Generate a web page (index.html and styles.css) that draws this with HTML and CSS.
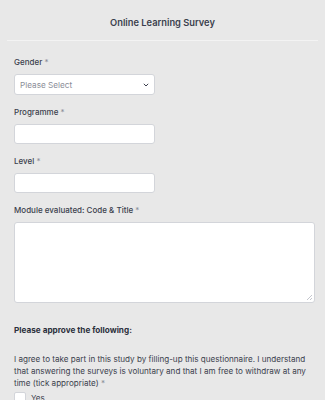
FILE: index.html
```html
<!DOCTYPE html>
<html lang="en">
    <head>
        <meta charset="utf-8">
        <title>Online Learning Survey</title>
        <meta name="viewport" content="width=device-width, initial-scale=1">
        <link rel="stylesheet" href="styles.css">
    </head>
    <body>
        <div class="formHeader">
            <h1 class="formTitle">Online Learning Survey</h1>
        </div>

        <div class="field">
            <label class="fieldLabel">Gender <span class="req">*</span></label>
            <div class="selectBox">
                <span class="placeholder">Please Select</span>
                <svg class="caret" width="6" height="4" viewBox="0 0 6 4"><path d="M0.8 0.8 L3 3 L5.2 0.8" fill="none" stroke="#3b3f4d" stroke-width="1"/></svg>
            </div>
        </div>

        <div class="field">
            <label class="fieldLabel">Programme <span class="req">*</span></label>
            <div class="textInput"></div>
        </div>

        <div class="field">
            <label class="fieldLabel">Level <span class="req">*</span></label>
            <div class="textInput"></div>
        </div>

        <div class="field">
            <label class="fieldLabel">Module evaluated: Code &amp; Title <span class="req">*</span></label>
            <div class="textArea">
                <svg class="grip" width="6" height="6" viewBox="0 0 6 6"><path d="M1 6 L6 1 M4 6 L6 4" stroke="#b5b8c0" stroke-width="0.8"/></svg>
            </div>
        </div>

        <h2 class="sectionHead">Please approve the following:</h2>

        <div class="field">
            <p class="consent">I agree to take part in this study by filling-up this questionnaire. I understand that answering the surveys is voluntary and that I am free to withdraw at any time (tick appropriate) <span class="req">*</span></p>
            <div class="checkRow">
                <span class="checkBox"></span>
                <span class="checkText">Yes</span>
            </div>
        </div>
    </body>
</html>
```

FILE: styles.css
```css
html, body {
    margin: 0;
    padding: 0;
}

body {
    background-color: #e8e8e8;
    font-family: Inter, "Noto Sans", sans-serif;
    color: #3b3f4d;
    width: 325px;
    height: 400px;
    overflow: hidden;
}

.formHeader {
    margin: 0 7px;
    padding: 16px 0 10px 0;
    border-bottom: 1px solid #f3f3f3;
    text-align: center;
}

.formTitle {
    margin: 0;
    font-size: 9.3px;
    font-weight: 600;
    line-height: 14px;
    color: #3b3f4d;
}

.field {
    padding: 0 10px 0 14px;
}

.fieldLabel {
    display: block;
    font-size: 8px;
    font-weight: 500;
    line-height: 12px;
    margin-bottom: 6px;
}

.req {
    color: #8a8e98;
    font-weight: 400;
}

.field:nth-of-type(2) {
    margin-top: 15px;
}

.selectBox {
    box-sizing: border-box;
    width: 141px;
    height: 21px;
    background: #fff;
    border: 1px solid #d3d5da;
    border-radius: 3px;
    display: flex;
    align-items: center;
    justify-content: space-between;
    padding: 0 5px 0 5px;
    margin-bottom: 11px;
}

.placeholder {
    font-size: 8.2px;
    color: #8a8e98;
}

.textInput {
    box-sizing: border-box;
    width: 141px;
    height: 20px;
    background: #fff;
    border: 1px solid #d3d5da;
    border-radius: 3px;
    margin-bottom: 11px;
}

.textArea {
    box-sizing: border-box;
    position: relative;
    width: 301px;
    height: 81px;
    background: #fff;
    border: 1px solid #d3d5da;
    border-radius: 3px;
}

.grip {
    position: absolute;
    right: 2px;
    bottom: 2px;
}

.sectionHead {
    margin: 21px 0 0 14px;
    font-size: 8.2px;
    font-weight: 700;
    line-height: 12px;
    color: #2c303c;
}

.consent {
    margin: 17px 0 0 0;
    font-size: 8.1px;
    line-height: 12px;
    color: #3b3f4d;
}

.checkRow {
    display: flex;
    align-items: center;
    margin-top: 3px;
}

.checkBox {
    width: 10px;
    height: 10px;
    background: #fff;
    border: 1px solid #d3d5da;
    border-radius: 2px;
    margin-right: 5px;
}

.checkText {
    font-size: 8px;
    line-height: 10px;
    color: #3b3f4d;
}
```
